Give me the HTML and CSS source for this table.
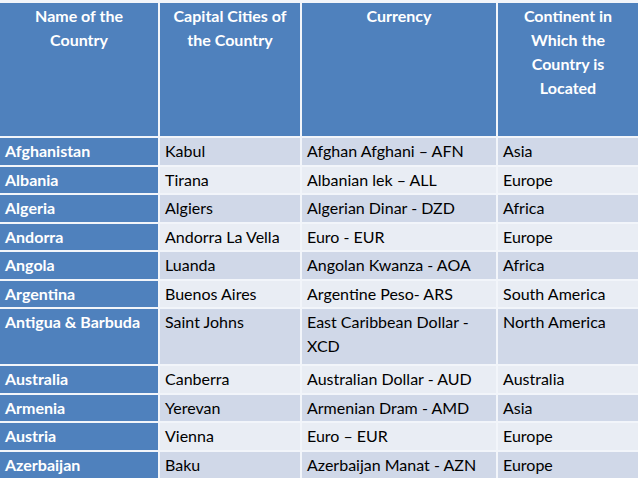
FILE: index.html
```html
<!DOCTYPE html>
<html>
<head>
<meta charset="utf-8">
<link rel="stylesheet" href="styles.css">
</head>
<body>
<div class="table">
  <div class="hd">Name of the<br>Country</div>
  <div class="hd">Capital Cities of<br>the Country</div>
  <div class="hd">Currency</div>
  <div class="hd">Continent in<br>Which the<br>Country is<br>Located</div>

  <div class="name">Afghanistan</div><div class="c dark">Kabul</div><div class="c dark">Afghan Afghani – AFN</div><div class="c dark">Asia</div>
  <div class="name">Albania</div><div class="c light">Tirana</div><div class="c light">Albanian lek – ALL</div><div class="c light">Europe</div>
  <div class="name">Algeria</div><div class="c dark">Algiers</div><div class="c dark">Algerian Dinar - DZD</div><div class="c dark">Africa</div>
  <div class="name">Andorra</div><div class="c light">Andorra La Vella</div><div class="c light">Euro - EUR</div><div class="c light">Europe</div>
  <div class="name">Angola</div><div class="c dark">Luanda</div><div class="c dark">Angolan Kwanza - AOA</div><div class="c dark">Africa</div>
  <div class="name">Argentina</div><div class="c light">Buenos Aires</div><div class="c light">Argentine Peso- ARS</div><div class="c light">South America</div>
  <div class="name tall">Antigua &amp; Barbuda</div><div class="c dark tall">Saint Johns</div><div class="c dark tall">East Caribbean Dollar -<br>XCD</div><div class="c dark tall">North America</div>
  <div class="name">Australia</div><div class="c light">Canberra</div><div class="c light">Australian Dollar - AUD</div><div class="c light">Australia</div>
  <div class="name">Armenia</div><div class="c dark">Yerevan</div><div class="c dark">Armenian Dram - AMD</div><div class="c dark">Asia</div>
  <div class="name">Austria</div><div class="c light">Vienna</div><div class="c light">Euro – EUR</div><div class="c light">Europe</div>
  <div class="name">Azerbaijan</div><div class="c dark">Baku</div><div class="c dark">Azerbaijan Manat - AZN</div><div class="c dark">Europe</div>
</div>
</body>
</html>
```
FILE: styles.css
```css
html, body {
  margin: 0;
  padding: 0;
  background: #ffffff;
}
.table {
  width: 638px;
  height: 478px;
  box-sizing: border-box;
  padding-top: 3px;
  background: #f2f5fa;
  display: grid;
  grid-template-columns: 158px 140px 194px 140px;
  grid-template-rows: 133px repeat(12, 1fr);
  gap: 2px;
  font-family: "Lato", "Open Sans", sans-serif;
  font-size: 16px;
  line-height: 24px;
  overflow: hidden;
}
.hd {
  background: #4f81bd;
  color: #ffffff;
  font-weight: bold;
  text-align: center;
  padding-top: 1px;
}
.name {
  background: #4f81bd;
  color: #ffffff;
  font-weight: bold;
  padding: 1px 0 0 5px;
  white-space: nowrap;
}
.c {
  color: #000000;
  padding: 1px 0 0 5px;
  white-space: nowrap;
}
.dark { background: #d0d8e8; }
.light { background: #e9edf4; }
.tall { grid-row: span 2; }
```
